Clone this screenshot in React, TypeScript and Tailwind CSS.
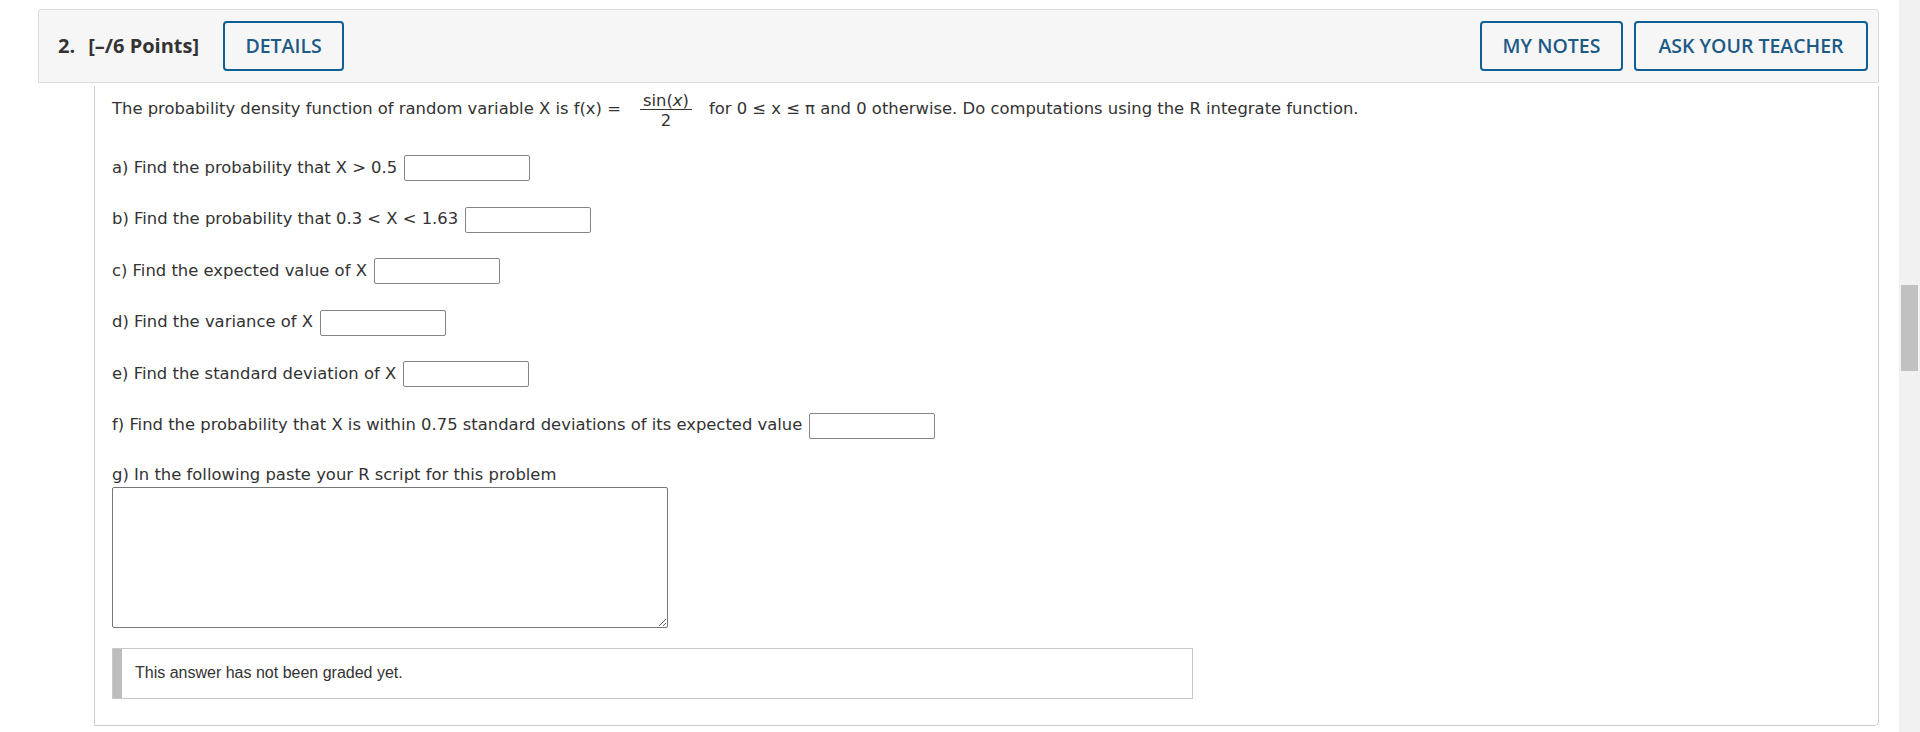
import React from "react";

const body = "font-['DejaVu_Sans',Verdana,sans-serif] text-[16.4px] text-[#333]";

function AnswerRow({ label, className = "" }: { label: string; className?: string }) {
    return (
        <div className={`flex items-center h-[26px] ${className}`}>
            <span className="whitespace-pre">{label}</span>
            <input className="ml-[7px] w-[126px] h-[26px] border border-[#858585] rounded-[2px] bg-white outline-none" />
        </div>
    );
}

function HeaderButton({ children, w }: { children: React.ReactNode; w: string }) {
    return (
        <button className={`${w} h-[50px] flex items-center justify-center border-2 border-[#0e5f94] rounded-[4px] text-[#1d5a85] font-semibold text-[19.5px]`}>
            {children}
        </button>
    );
}

export default function App() {
    return (
        <div className="flex h-[732px] w-[1920px] overflow-hidden bg-white">
            <div className="flex-1 pl-[38px] pr-[20px] pt-[9px]">
                {/* question header */}
                <div className="flex items-center h-[74px] bg-[#f6f6f6] border border-[#dcdcdc] rounded-t-[3px] pl-[19px] pr-[10px] font-['Open_Sans',sans-serif] text-[#333]">
                    <span className="font-bold text-[20px]">2.</span>
                    <span className="font-bold text-[20px] ml-[13px]">[–/6 Points]</span>
                    <div className="ml-[24px]">
                        <HeaderButton w="w-[121px]">DETAILS</HeaderButton>
                    </div>
                    <div className="ml-auto flex gap-[11px]">
                        <HeaderButton w="w-[143px]">MY NOTES</HeaderButton>
                        <HeaderButton w="w-[234px]">ASK YOUR TEACHER</HeaderButton>
                    </div>
                </div>

                {/* question body */}
                <div className={`ml-[56px] border-x border-b border-[#cfcfcf] rounded-br-[5px] pl-[17px] pb-[26px] ${body}`}>
                    <div className="flex items-center h-[46px] mt-[3px] whitespace-pre">
                        <span>The probability density function of random variable X is f(x) =</span>
                        <span className="ml-[19px] mr-[17px] mt-[4px] flex flex-col items-center">
                            <span className="leading-[16px] px-[3px]">
                                sin(<i>x</i>)
                            </span>
                            <span className="self-stretch border-t border-[#333]" />
                            <span className="leading-[16px] pt-[3px]">2</span>
                        </span>
                        <span>for 0 ≤ x ≤ π and 0 otherwise. Do computations using the R integrate function.</span>
                    </div>

                    <div className="flex flex-col gap-[25.5px] mt-[23px]">
                        <AnswerRow label="a) Find the probability that X > 0.5" />
                        <AnswerRow label="b) Find the probability that 0.3 < X < 1.63" />
                        <AnswerRow label="c) Find the expected value of X" />
                        <AnswerRow label="d) Find the variance of X" />
                        <AnswerRow label="e) Find the standard deviation of X" />
                        <AnswerRow label="f) Find the probability that X is within 0.75 standard deviations of its expected value" />
                    </div>

                    <div className="mt-[26.5px] h-[20px] leading-[20px]">g) In the following paste your R script for this problem</div>
                    <textarea className="block mt-[2px] w-[556px] h-[141px] border border-[#767676] rounded-[2px] bg-white outline-none" />

                    <div className="flex mt-[19.5px] w-[1081px] h-[51px] border border-[#c8c8c8]">
                        <div className="w-[9px] bg-[#bdbdbd]" />
                        <div className="flex items-center pl-[13px] font-['Liberation_Sans',Arial,sans-serif] text-[16px] text-[#333]">
                            This answer has not been graded yet.
                        </div>
                    </div>
                </div>
            </div>

            {/* scrollbar */}
            <div className="w-[21px] h-full bg-[#f1f1f1] flex flex-col">
                <div className="mt-[285px] h-[86px] ml-[2px] w-[17px] bg-[#c1c1c1]" />
            </div>
        </div>
    );
}
